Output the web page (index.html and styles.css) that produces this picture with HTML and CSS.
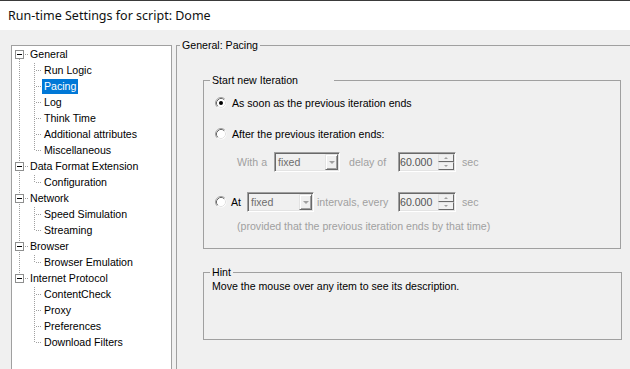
FILE: index.html
```html
<!DOCTYPE html>
<html>
<head>
<meta charset="utf-8">
<title>Run-time Settings</title>
<link rel="stylesheet" href="styles.css">
</head>
<body>
<div class="titlebar"><span class="title">Run-time Settings for script: Dome</span></div>
<div class="main">
  <div class="tree">
    <div class="node">
      <div class="row top"><span class="toggle"></span><span class="label">General</span></div>
      <div class="children">
        <div class="row child"><span class="label">Run Logic</span></div>
        <div class="row child"><span class="label selected">Pacing</span></div>
        <div class="row child"><span class="label">Log</span></div>
        <div class="row child"><span class="label">Think Time</span></div>
        <div class="row child"><span class="label">Additional attributes</span></div>
        <div class="row child"><span class="label">Miscellaneous</span></div>
      </div>
    </div>
    <div class="node">
      <div class="row top"><span class="toggle"></span><span class="label">Data Format Extension</span></div>
      <div class="children">
        <div class="row child"><span class="label">Configuration</span></div>
      </div>
    </div>
    <div class="node">
      <div class="row top"><span class="toggle"></span><span class="label">Network</span></div>
      <div class="children">
        <div class="row child"><span class="label">Speed Simulation</span></div>
        <div class="row child"><span class="label">Streaming</span></div>
      </div>
    </div>
    <div class="node">
      <div class="row top"><span class="toggle"></span><span class="label">Browser</span></div>
      <div class="children">
        <div class="row child"><span class="label">Browser Emulation</span></div>
      </div>
    </div>
    <div class="node">
      <div class="row top"><span class="toggle"></span><span class="label">Internet Protocol</span></div>
      <div class="children">
        <div class="row child"><span class="label">ContentCheck</span></div>
        <div class="row child"><span class="label">Proxy</span></div>
        <div class="row child"><span class="label">Preferences</span></div>
        <div class="row child"><span class="label">Download Filters</span></div>
      </div>
    </div>
  </div>

  <fieldset class="group outer">
    <legend class="legend outer-legend">General: Pacing</legend>
    <div class="outer-body">
      <fieldset class="group iteration">
        <legend class="legend inner-legend wide">Start new Iteration</legend>
        <div class="iter-body">
          <div class="opt opt1">
            <svg class="radio" width="12" height="12" viewBox="0 0 12 12">
              <circle cx="6" cy="6" r="5.5" fill="#fff"/>
              <path d="M2.11 9.89 A5.5 5.5 0 0 1 9.89 2.11" fill="none" stroke="#a0a0a0"/>
              <path d="M2.82 9.18 A4.5 4.5 0 0 1 9.18 2.82" fill="none" stroke="#696969"/>
              <path d="M9.18 2.82 A4.5 4.5 0 0 1 2.82 9.18" fill="none" stroke="#e3e3e3"/>
              <circle cx="6" cy="6" r="3.5" fill="#fff"/>
              <circle cx="6" cy="6" r="2" fill="#000"/>
            </svg>
            <span>As soon as the previous iteration ends</span>
          </div>
          <div class="opt opt2">
            <svg class="radio" width="12" height="12" viewBox="0 0 12 12">
              <circle cx="6" cy="6" r="5.5" fill="#fff"/>
              <path d="M2.11 9.89 A5.5 5.5 0 0 1 9.89 2.11" fill="none" stroke="#a0a0a0"/>
              <path d="M2.82 9.18 A4.5 4.5 0 0 1 9.18 2.82" fill="none" stroke="#696969"/>
              <path d="M9.18 2.82 A4.5 4.5 0 0 1 2.82 9.18" fill="none" stroke="#e3e3e3"/>
              <circle cx="6" cy="6" r="3.5" fill="#fff"/>
            </svg>
            <span>After the previous iteration ends:</span>
          </div>
          <div class="sub">
            <span class="dis w-witha">With a</span>
            <div class="select s1"><span>fixed</span><span class="dd"></span></div>
            <span class="dis w-delay">delay of</span>
            <div class="spin"><span>60.000</span><span class="spinbtns"><span class="up"></span><span class="down"></span></span></div>
            <span class="dis sec">sec</span>
          </div>
          <div class="opt opt3">
            <svg class="radio" width="12" height="12" viewBox="0 0 12 12">
              <circle cx="6" cy="6" r="5.5" fill="#fff"/>
              <path d="M2.11 9.89 A5.5 5.5 0 0 1 9.89 2.11" fill="none" stroke="#a0a0a0"/>
              <path d="M2.82 9.18 A4.5 4.5 0 0 1 9.18 2.82" fill="none" stroke="#696969"/>
              <path d="M9.18 2.82 A4.5 4.5 0 0 1 2.82 9.18" fill="none" stroke="#e3e3e3"/>
              <circle cx="6" cy="6" r="3.5" fill="#fff"/>
            </svg>
            <span class="w-at">At</span>
            <div class="select s2"><span>fixed</span><span class="dd"></span></div>
            <span class="dis w-every">intervals, every</span>
            <div class="spin"><span>60.000</span><span class="spinbtns"><span class="up"></span><span class="down"></span></span></div>
            <span class="dis sec">sec</span>
          </div>
          <div class="note dis">(provided that the previous iteration ends by that time)</div>
        </div>
      </fieldset>
      <fieldset class="group hint">
        <legend class="legend inner-legend">Hint</legend>
        <div class="hint-body">Move the mouse over any item to see its description.</div>
      </fieldset>
    </div>
  </fieldset>
</div>
</body>
</html>
```

FILE: styles.css
```css
html, body {
  margin: 0;
  padding: 0;
}
body {
  width: 630px;
  height: 369px;
  overflow: hidden;
  background: #f0f0f0;
  font: 10.6px "Liberation Sans", Arial, sans-serif;
  color: #000;
}

.titlebar {
  height: 29px;
  background: #fff;
  border-top: 1px solid #3a3a3a;
  display: flex;
  align-items: center;
  padding-left: 8px;
  font: 12.5px "Noto Sans", sans-serif;
  color: #111;
}

.main {
  display: flex;
  align-items: flex-start;
  padding-left: 11px;
  height: 339px;
  overflow: hidden;
}

/* tree */
.tree {
  flex: none;
  width: 161px;
  height: 360px;
  box-sizing: border-box;
  margin-top: 15px;
  border: 1px solid #a0a0a0;
  background: #fff;
}
.node {
  background-image: repeating-linear-gradient(to bottom, #a0a0a0 0 1px, transparent 1px 2px);
  background-repeat: no-repeat;
  background-position: 7px 0;
  background-size: 1px 100%;
}
.node:first-child {
  background-position: 7px 9px;
}
.node:last-child {
  background-size: 1px 8px;
}
.row {
  height: 16px;
  display: flex;
  align-items: flex-start;
  white-space: nowrap;
}
.row.top {
  background-image: repeating-linear-gradient(to right, #a0a0a0 0 1px, transparent 1px 2px);
  background-repeat: no-repeat;
  background-position: 13px 8px;
  background-size: 4px 1px;
}
.toggle {
  flex: none;
  width: 9px;
  height: 9px;
  box-sizing: border-box;
  margin: 4px 0 0 3px;
  border: 1px solid #8e8f8f;
  background: #fff;
  display: flex;
  align-items: center;
  justify-content: center;
}
.toggle::after {
  content: "";
  width: 5px;
  height: 1px;
  background: #000;
}
.label {
  line-height: 15px;
  height: 15px;
  margin-top: 1px;
  padding: 0 2px;
}
.row.top .label {
  margin-left: 4px;
}
.children {
  background-image: repeating-linear-gradient(to bottom, #a0a0a0 0 1px, transparent 1px 2px);
  background-repeat: no-repeat;
  background-position: 22px 1px;
  background-size: 1px calc(100% - 9px);
}
.row.child {
  background-image: repeating-linear-gradient(to right, #a0a0a0 0 1px, transparent 1px 2px);
  background-repeat: no-repeat;
  background-position: 24px 8px;
  background-size: 6px 1px;
}
.row.child .label {
  margin-left: 30px;
}
.label.selected {
  background: #0078d7;
  color: #fff;
}

/* group boxes */
.group {
  margin: 0;
  padding: 0;
  min-width: 0;
  border: 1px solid #a0a0a0;
}
.legend {
  padding: 0 2px;
  line-height: 13px;
  font-size: 10.6px;
}
.outer {
  flex: 1;
  margin: 9px 0 0 4px;
  height: 400px;
  border-right: none;
}
.outer-legend {
  margin-left: 3px;
}
.inner-legend {
  margin-left: 6px;
}
.inner-legend.wide {
  padding-right: 36px;
}
.outer-body {
  padding: 22px 0 0 26px;
}
.iteration {
  width: 418px;
  box-sizing: border-box;
}
.iter-body {
  padding: 8px 0 14px 0;
  display: flex;
  flex-direction: column;
}
.opt {
  display: flex;
  align-items: center;
  padding-left: 11px;
  white-space: nowrap;
}
.opt1, .opt2 {
  height: 16px;
}
.opt1 { margin-top: 0; }
.opt2 { margin-top: 15px; }
.radio {
  flex: none;
  margin-right: 5px;
}
.sub {
  height: 20px;
  margin-top: 10px;
  display: flex;
  align-items: center;
  padding-left: 33px;
  white-space: nowrap;
}
.opt3 {
  height: 20px;
  margin-top: 20px;
}
.opt3 .radio {
  margin-right: 4px;
}
.note {
  height: 16px;
  line-height: 16px;
  margin-top: 6px;
  padding-left: 33px;
  white-space: nowrap;
}
.dis {
  color: #a0a0a0;
}
.w-witha { width: 37px; flex: none; }
.w-delay { width: 49px; flex: none; margin-left: 9px; }
.w-at { width: 16px; flex: none; }
.w-every { width: 81px; flex: none; margin-left: 3px; }
.sec { margin-left: 6px; }

.select, .spin {
  flex: none;
  height: 20px;
  box-sizing: border-box;
  display: flex;
  align-items: center;
  background: #f0f0f0;
  border: 1px solid;
  border-color: #a0a0a0 #fff #fff #a0a0a0;
  box-shadow: inset 1px 1px #696969, inset -1px -1px #e3e3e3;
  color: #6d6d6d;
}
.select {
  padding-left: 3px;
}
.s1 { width: 66px; }
.s2 { width: 67px; }
.dd {
  margin-left: auto;
  margin-right: 1px;
  width: 13px;
  height: 16px;
  box-sizing: border-box;
  background: #f0f0f0;
  border: 1px solid;
  border-color: #e3e3e3 #696969 #696969 #e3e3e3;
  box-shadow: inset 1px 1px #fff, inset -1px -1px #a0a0a0;
  display: flex;
  align-items: center;
  justify-content: center;
}
.dd::after {
  content: "";
  width: 0;
  height: 0;
  border-left: 3px solid transparent;
  border-right: 3px solid transparent;
  border-top: 3px solid #a0a0a0;
}
.spin {
  width: 58px;
  padding-left: 1px;
  color: #555;
}
.spinbtns {
  margin-left: auto;
  margin-right: 1px;
  width: 16px;
  height: 16px;
  display: flex;
  flex-direction: column;
}
.spinbtns span {
  flex: 1;
  box-sizing: border-box;
  background: #f0f0f0;
  border: 1px solid;
  border-color: #e3e3e3 #696969 #696969 #e3e3e3;
  display: flex;
  align-items: center;
  justify-content: center;
}
.spinbtns .up::after {
  content: "";
  border-left: 2px solid transparent;
  border-right: 2px solid transparent;
  border-bottom: 2px solid #a0a0a0;
}
.spinbtns .down::after {
  content: "";
  border-left: 2px solid transparent;
  border-right: 2px solid transparent;
  border-top: 2px solid #a0a0a0;
}

.hint {
  width: 419px;
  box-sizing: border-box;
  margin-top: 17px;
}
.hint-body {
  padding: 0 0 46px 8px;
  line-height: 14px;
  white-space: nowrap;
}
```
